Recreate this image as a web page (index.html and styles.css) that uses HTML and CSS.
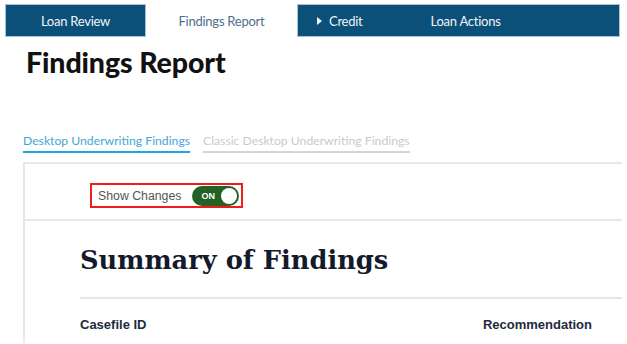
FILE: index.html
```html
<!DOCTYPE html>
<html>
<head>
<meta charset="utf-8">
<link rel="stylesheet" href="styles.css">
</head>
<body>
<nav class="topnav">
  <div class="tab tab-dark tab-first">Loan Review</div>
  <div class="tab tab-active">Findings Report</div>
  <div class="tab-rest">
    <span class="tab-item tab-credit"><span class="tri"></span>Credit</span>
    <span class="tab-item tab-actions">Loan Actions</span>
  </div>
</nav>
<h1 class="page-title">Findings Report</h1>
<div class="subtabs">
  <span class="subtab subtab-active">Desktop Underwriting Findings</span>
  <span class="subtab subtab-inactive">Classic Desktop Underwriting Findings</span>
</div>
<section class="panel">
  <div class="toggle-row">
    <div class="highlight">
      <span class="toggle-label">Show Changes</span>
      <span class="switch"><span class="switch-text">ON</span><span class="knob"></span></span>
    </div>
  </div>
  <div class="summary">
    <h2 class="summary-title">Summary of Findings</h2>
    <div class="summary-rule"></div>
    <div class="summary-cols">
      <span class="col-label">Casefile ID</span>
      <span class="col-label col-rec">Recommendation</span>
    </div>
  </div>
</section>
</body>
</html>
```

FILE: styles.css
```css
html, body {
  margin: 0;
  padding: 0;
  background: #ffffff;
  overflow: hidden;
}
body {
  width: 627px;
  height: 344px;
  font-family: "Lato", "Liberation Sans", sans-serif;
}
.topnav {
  display: flex;
  margin: 4px 0 0 5px;
  width: 615px;
  height: 33px;
}
.tab {
  display: flex;
  align-items: center;
  justify-content: center;
  font-size: 13px;
  letter-spacing: -0.25px;
  box-sizing: border-box;
}
.tab-dark, .tab-rest {
  background: #0a5079;
  color: #f2f4f7;
  border: 1px solid #a9c3d6;
}
.tab-first {
  width: 141px;
}
.tab-active {
  width: 151px;
  color: #4d6e8e;
  background: #ffffff;
}
.tab-rest {
  flex: 1;
  display: flex;
  align-items: center;
  font-size: 13px;
  letter-spacing: -0.25px;
  box-sizing: border-box;
}
.tab-item {
  display: inline-flex;
  align-items: center;
}
.tab-credit {
  margin-left: 19px;
}
.tri {
  width: 0;
  height: 0;
  border-top: 4px solid transparent;
  border-bottom: 4px solid transparent;
  border-left: 5px solid #f2f4f7;
  margin-right: 7px;
}
.tab-actions {
  margin-left: 68px;
}
.page-title {
  margin: 8px 0 0 26px;
  font-size: 28.5px;
  font-weight: 900;
  color: #111111;
  line-height: 34px;
  letter-spacing: -0.1px;
}
.subtabs {
  display: flex;
  gap: 13px;
  margin: 53px 0 0 23px;
}
.subtab {
  font-size: 12.2px;
  padding-bottom: 2px;
  line-height: 17px;
  white-space: nowrap;
}
.subtab-active {
  color: #45a6d8;
  border-bottom: 2px solid #1ea5e0;
}
.subtab-inactive {
  color: #c9c9d2;
  border-bottom: 2px solid #d4d4dc;
}
.panel {
  margin: 9px 0 0 23px;
  width: 597px;
  border-top: 2px solid #e8e8e8;
  border-left: 2px solid #e8e8e8;
  height: 179px;
}
.toggle-row {
  height: 57px;
  border-bottom: 2px solid #e8e8e8;
  box-sizing: border-box;
  padding: 19px 0 0 65px;
}
.highlight {
  display: inline-flex;
  align-items: center;
  border: 2px solid #ee1c1c;
  height: 25px;
  box-sizing: border-box;
  width: 153px;
  padding-left: 6px;
  white-space: nowrap;
}
.toggle-label {
  font-family: "Liberation Sans", Arial, sans-serif;
  font-size: 12.3px;
  color: #555555;
}
.switch {
  position: relative;
  margin-left: 11px;
  width: 47px;
  height: 20px;
  border-radius: 10px;
  background: #236124;
  display: inline-flex;
  align-items: center;
  flex-shrink: 0;
}
.switch-text {
  font-family: "Liberation Sans", Arial, sans-serif;
  font-size: 9px;
  font-weight: 700;
  color: #ffffff;
  margin-left: 9px;
}
.knob {
  position: absolute;
  right: 2px;
  top: 2px;
  width: 16px;
  height: 16px;
  border-radius: 50%;
  background: #ffffff;
}
.summary {
  padding-left: 55px;
}
.summary-title {
  margin: 22px 0 0 0;
  font-family: "DejaVu Serif", "Liberation Serif", serif;
  font-size: 25.7px;
  font-weight: 700;
  color: #131a2c;
  line-height: 34px;
}
.summary-rule {
  margin-top: 20px;
  height: 2px;
  background: #e6e6e6;
}
.summary-cols {
  display: flex;
  margin-top: 18px;
}
.col-label {
  font-family: "Liberation Sans", Arial, sans-serif;
  font-size: 13px;
  font-weight: 700;
  color: #1d2a40;
}
.col-rec {
  margin-left: auto;
  margin-right: 30px;
}
```
